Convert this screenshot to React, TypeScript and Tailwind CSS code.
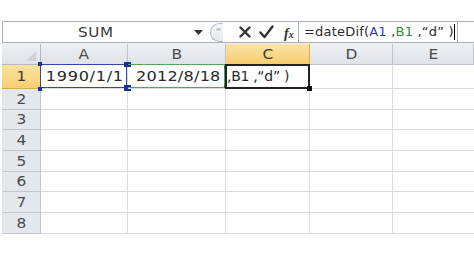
import React from "react";

const cols = [
  { l: "A", w: 87 },
  { l: "B", w: 98 },
  { l: "C", w: 84 },
  { l: "D", w: 83 },
  { l: "E", w: 81 },
];

const rowH = [21, 20, 21, 21, 20, 21, 21];

export default function App() {
  return (
    <div className="w-[474px] h-[256px] bg-white overflow-hidden pt-[21px] font-['DejaVu_Sans',sans-serif] text-[#2a2a2a]">
      {/* formula bar */}
      <div className="ml-[2px] h-[22px] flex border-t border-b border-l border-[#aab1ba] bg-white">
        <div className="w-[203px] relative flex items-center justify-center">
          <span className="inline-block text-[13.5px] scale-x-[1.12] text-[#3a3a3a] tracking-[0.5px] -ml-[18px]">SUM</span>
          <svg className="absolute left-[191px] top-[8px]" width="9" height="5" viewBox="0 0 9 5">
            <path d="M0 0 H9 L4.5 5 Z" fill="#333" />
          </svg>
        </div>
        <div className="w-[92px] flex items-center relative">
          <div className="ml-[4px] w-[13px] h-[19px] rounded-l-full border-l border-t border-b border-[#b9bec5] bg-gradient-to-b from-[#f7f8fa] to-[#e7e9ec] flex items-center justify-center">
            <div className="w-[5px] h-[3px] rounded-full bg-[#c9cdd2] ml-[2px] -mt-[6px]" />
          </div>
          <svg className="absolute left-[33px] top-[4px]" width="12" height="12" viewBox="0 0 12 12">
            <path d="M1.5 1.5 L10.5 10.5 M10.5 1.5 L1.5 10.5" stroke="#333" strokeWidth="2.4" strokeLinecap="round" />
          </svg>
          <svg className="absolute left-[53px] top-[3px]" width="15" height="14" viewBox="0 0 15 14">
            <path d="M1.5 7.5 L5.5 12 L13.5 1.5" stroke="#333" strokeWidth="2.4" fill="none" strokeLinecap="round" strokeLinejoin="round" />
          </svg>
          <span className="absolute left-[78px] top-[1px] font-['Liberation_Serif',serif] italic font-bold text-[14px] text-[#333]">
            f<span className="text-[10px]">x</span>
          </span>
        </div>
        <div className="w-[159px] border-l border-[#aab1ba] flex items-center pl-[5px] relative">
          <span className="inline-block text-[13px] tracking-[0.2px] whitespace-nowrap text-[#2a2a2a]">
            =dateDif(<span className="text-[#2c3fa8]">A1</span> ,<span className="text-[#2e8b3a]">B1</span> ,“d” )
          </span>
          <div className="absolute right-[2px] top-[2px] w-[1.5px] h-[16px] bg-black" />
        </div>
        <div className="flex-1 border-l border-[#aab1ba]" />
      </div>
      <div className="h-[1px] bg-[#eef0f2]" />

      {/* grid */}
      <div className="ml-[2px]">
        {/* header row */}
        <div className="flex h-[21px]">
          <div className="w-[39px] relative bg-gradient-to-b from-[#eef0f3] to-[#dfe3e8] border-r border-b border-[#b3b9c1]">
            <svg className="absolute right-[4px] bottom-[3px]" width="10" height="10" viewBox="0 0 10 10">
              <path d="M10 0 V10 H0 Z" fill="#cfd3d8" />
            </svg>
          </div>
          {cols.map((c) => (
            <div
              key={c.l}
              style={{ width: c.w }}
              className={
                "flex items-center justify-center border-r border-b text-[14px] " +
                (c.l === "C"
                  ? "bg-gradient-to-b from-[#fbe4a6] to-[#f6cd6c] border-[#d7ad4c] text-[#3a3a3a]"
                  : "bg-gradient-to-b from-[#eef0f3] to-[#dfe3e8] border-[#bfc5cc] text-[#4a4a4a]")
              }
            >
              <span className="inline-block scale-x-[1.1]">{c.l}</span>
            </div>
          ))}
        </div>

        {/* row 1 */}
        <div className="flex h-[24px]">
          <div className="w-[39px] flex items-center justify-center bg-gradient-to-b from-[#fbe2a0] to-[#f6cf72] border-r border-b border-[#d5ac50] text-[14px] text-[#3a3a3a]">
            <span className="inline-block scale-x-[1.1]">1</span>
          </div>
          {/* A1 */}
          <div className="w-[87px] relative border-r border-b border-[#dadcdf] flex items-end justify-end pb-[1px] pr-[3px]">
            <span className="inline-block origin-right scale-x-[1.15] text-[14px] text-[#2a2a2a] tracking-[0.6px]">1990/1/1</span>
            <div className="absolute inset-0 -left-px -top-px border-[1.5px] border-[#3347a8]" />
            <div className="absolute -left-[3px] -top-[3px] w-[4px] h-[4px] bg-[#1f2f8f]" />
            <div className="absolute -left-[3px] -bottom-[3px] w-[4px] h-[4px] bg-[#1f2f8f]" />
            <div className="absolute -right-[4px] -top-[3px] w-[7px] h-[5px] bg-[#1f2f8f]" />
            <div className="absolute -right-[4px] -bottom-[3px] w-[7px] h-[6px] bg-[#1f2f8f]" />
          </div>
          {/* B1 */}
          <div className="w-[98px] relative border-r border-b border-[#dadcdf] flex items-end justify-end pb-[1px] pr-[4px]">
            <span className="inline-block origin-right scale-x-[1.15] text-[14px] text-[#2a2a2a] tracking-[0.2px]">2012/8/18</span>
            <div className="absolute inset-0 -top-px border-[1.5px] border-l-0 border-[#58a35a]" />
            <div className="absolute -right-[2px] top-[1px] w-[3px] h-[3px] bg-[#2f6e33]" />
            <div className="absolute -right-[2px] bottom-[0px] w-[3px] h-[3px] bg-[#2f6e33]" />
          </div>
          {/* C1 */}
          <div className="w-[84px] relative border-r border-b border-[#dadcdf] flex items-end pb-[1px] pl-[1px] overflow-visible">
            <span className="inline-block text-[14px] tracking-[-0.3px] text-[#2a2a2a] whitespace-nowrap">,B1 ,“d” )</span>
            <div className="absolute -left-px -top-px -right-px -bottom-px border-2 border-[#222]" />
            <div className="absolute -right-[3px] -bottom-[3px] w-[5px] h-[5px] bg-[#111]" />
          </div>
          <div className="w-[83px] border-r border-b border-[#dadcdf]" />
          <div className="w-[81px] border-b border-[#dadcdf]" />
        </div>

        {/* rows 2-8 */}
        {rowH.map((h, i) => (
          <div key={i} className="flex" style={{ height: h }}>
            <div className="w-[39px] flex items-center justify-center bg-[#e4e7ec] border-r border-b border-[#c2c7ce] text-[14px] text-[#4a4a4a]">
              <span className="inline-block scale-x-[1.1]">{i + 2}</span>
            </div>
            {cols.map((c, j) => (
              <div
                key={c.l}
                style={{ width: c.w }}
                className={"border-b border-[#dadcdf] " + (j < 4 ? "border-r" : "")}
              />
            ))}
          </div>
        ))}
      </div>
    </div>
  );
}
